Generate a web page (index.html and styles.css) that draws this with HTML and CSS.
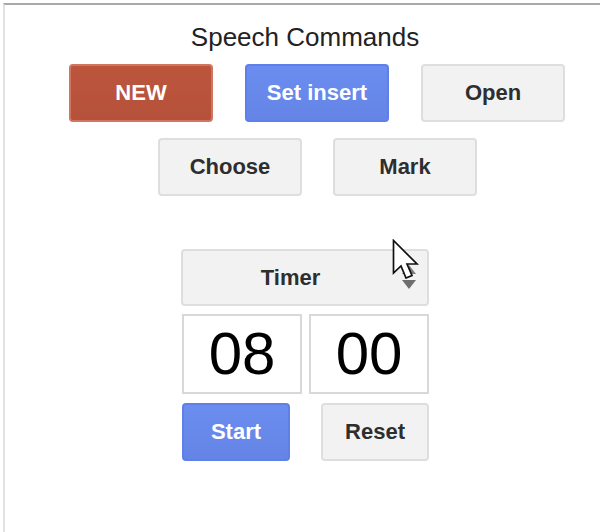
FILE: index.html
```html
<!DOCTYPE html>
<html lang="en">
<head>
<meta charset="utf-8">
<title>Speech Commands</title>
<link rel="stylesheet" href="styles.css">
</head>
<body>
<main class="frame">
  <h1 class="title">Speech Commands</h1>
  <div class="commands">
    <div class="row">
      <button class="btn red">NEW</button>
      <button class="btn blue">Set insert</button>
      <button class="btn">Open</button>
    </div>
    <div class="row row-tight">
      <button class="btn">Choose</button>
      <button class="btn">Mark</button>
    </div>
  </div>
  <section class="timer">
    <div class="select">Timer
      <svg class="updown" width="16" height="24" viewBox="0 0 16 24"><path d="M8 0l7 9H1z" fill="#7b7b7b"/><path d="M1 15h14l-7 9z" fill="#6e6e6e"/></svg>
    </div>
    <div class="fields">
      <div class="field">08</div>
      <div class="field">00</div>
    </div>
    <div class="actions">
      <button class="btn small blue">Start</button>
      <button class="btn small">Reset</button>
    </div>
  </section>
  <svg class="cursor" width="28" height="40" viewBox="0 0 28 40"><path d="M1.500 1.500V34l7.500-7 5 12 6-2.500-5-11.500H25z" fill="#fff" stroke="#111" stroke-width="1.700" stroke-linejoin="miter"/></svg>
</main>
</body>
</html>
```

FILE: styles.css
```css
* { box-sizing: border-box; }
html, body { margin: 0; height: 100%; background: #fff; }
body { padding: 3px 0 0 3px; font-family: "Liberation Sans", Arial, sans-serif; overflow: hidden; }
.frame {
  position: relative;
  width: 602px;
  height: 529px;
  border-top: 2px solid #a9a9a9;
  border-left: 2px solid #e2e2e2;
}
.title {
  margin: 0;
  padding-top: 17px;
  height: 59px;
  text-align: center;
  font-size: 26px;
  line-height: 30px;
  font-weight: 400;
  color: #222;
}
.commands { display: flex; flex-direction: column; gap: 16px; padding-left: 24px; }
.row { display: flex; justify-content: center; gap: 32px; }
.row-tight { gap: 31px; padding-left: 1px; }
.btn {
  width: 144px;
  height: 58px;
  padding: 0;
  border: 2px solid #dedede;
  border-radius: 4px;
  background: #f2f2f2;
  color: #2e2e2e;
  font: 700 22px "Liberation Sans", Arial, sans-serif;
}
.red { background: linear-gradient(#bd553d, #b5513a); border-color: #cf7560; color: #fff; }
.blue { background: linear-gradient(#6b8def, #6485e6); border-color: #5f80e8; color: #fff; }
.small { width: 108px; }
.timer { width: 248px; margin: 53px auto 0; display: flex; flex-direction: column; }
.select {
  position: relative;
  height: 57px;
  padding-right: 29px;
  border: 2px solid #dedede;
  border-radius: 4px;
  background: #f2f2f2;
  color: #2e2e2e;
  font-size: 22px;
  font-weight: 700;
  line-height: 53px;
  text-align: center;
}
.updown { position: absolute; right: 10px; top: 14px; }
.fields { display: flex; gap: 7px; margin: 8px 0 9px 1px; }
.field {
  width: 120px;
  height: 80px;
  border: 2px solid #d8d8d8;
  color: #000;
  font-size: 60px;
  line-height: 76px;
  text-align: center;
}
.actions { display: flex; justify-content: space-between; padding-left: 1px; }
.cursor { position: absolute; left: 387px; top: 234px; }
```
